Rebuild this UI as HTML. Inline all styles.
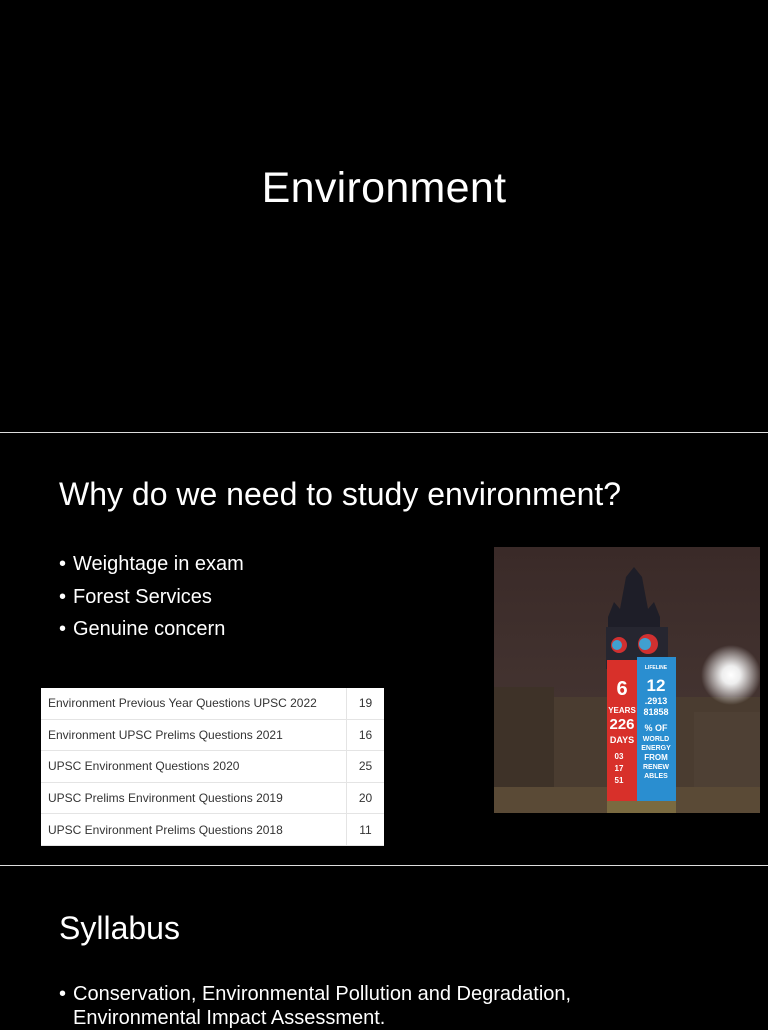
<!DOCTYPE html>
<html><head><style>
body{margin:0;width:768px;height:1024px;background:#000;overflow:hidden;position:relative;font-family:"Liberation Sans",sans-serif;color:#fff}
.a{position:absolute}
.line{position:absolute;left:0;width:768px;height:1px;background:#ddd}
.t{font-family:"Liberation Sans",sans-serif}
table{border-collapse:collapse;background:#fff;color:#333;font-size:12px}
td{height:30.6px;border-bottom:1px solid #e4e4e4;padding:0 0 0 7px}
td.n{border-left:1px solid #e4e4e4;text-align:center;padding:0;width:37px}
.b{position:relative;padding-left:14px}
.b:before{content:"•";position:absolute;left:0}
</style></head><body>
<div class="a t" style="left:0;width:768px;top:164px;text-align:center;font-size:43px;letter-spacing:0.3px">Environment</div>
<div class="line" style="top:432px"></div>
<div class="a t" style="left:59px;top:476px;font-size:32px">Why do we need to study environment?</div>
<div class="a t" style="left:59px;top:548px;font-size:20px;line-height:32.5px"><div class="b">Weightage in exam</div><div class="b">Forest Services</div><div class="b">Genuine concern</div></div>
<table class="a" style="left:41px;top:688px;width:343px">
<tr><td>Environment Previous Year Questions UPSC 2022</td><td class="n">19</td></tr>
<tr><td>Environment UPSC Prelims Questions 2021</td><td class="n">16</td></tr>
<tr><td>UPSC Environment Questions 2020</td><td class="n">25</td></tr>
<tr><td>UPSC Prelims Environment Questions 2019</td><td class="n">20</td></tr>
<tr><td>UPSC Environment Prelims Questions 2018</td><td class="n">11</td></tr>
</table>
<svg class="a" style="left:494px;top:547px" width="266" height="266" viewBox="0 0 266 266">
<defs><linearGradient id="s" x1="0" y1="0" x2="0" y2="1"><stop offset="0" stop-color="#3a2a28"/><stop offset="1" stop-color="#4a3a36"/></linearGradient>
<radialGradient id="l" cx="0.5" cy="0.5" r="0.5"><stop offset="0" stop-color="#fff"/><stop offset="0.3" stop-color="#eee"/><stop offset="1" stop-color="#fff" stop-opacity="0"/></radialGradient></defs>
<rect width="266" height="266" fill="url(#s)"/>
<rect x="0" y="150" width="266" height="116" fill="#4a3c30"/>
<rect x="0" y="140" width="60" height="126" fill="#3e3228"/>
<rect x="200" y="165" width="66" height="101" fill="#4e4034"/>
<rect x="0" y="240" width="266" height="26" fill="#5a4a36"/>
<circle cx="237" cy="128" r="30" fill="url(#l)"/>
<path d="M114 88 L114 70 L120 55 L126 62 L132 30 L140 20 L148 30 L154 62 L160 55 L166 70 L166 88 Z" fill="#1e1e28"/>
<rect x="112" y="80" width="62" height="42" fill="#262630"/>
<circle cx="125" cy="98" r="8" fill="#d03030"/><circle cx="154" cy="97" r="10" fill="#d03030"/>
<circle cx="123" cy="98" r="5" fill="#40a0d0"/><circle cx="151" cy="97" r="6" fill="#40a0d0"/>
<rect x="113" y="113" width="30" height="141" fill="#d8302a"/>
<rect x="143" y="110" width="39" height="144" fill="#2a8ed0"/>
<rect x="113" y="254" width="69" height="12" fill="#7a6a40"/>
<g fill="#fff" font-family="Liberation Sans,sans-serif" font-weight="bold" text-anchor="middle">
<text x="128" y="148" font-size="20">6</text><text x="128" y="166" font-size="8">YEARS</text>
<text x="128" y="182" font-size="15">226</text><text x="128" y="196" font-size="9">DAYS</text>
<text x="125" y="212" font-size="8">03</text><text x="125" y="224" font-size="8">17</text><text x="125" y="236" font-size="8">51</text>
<text x="162" y="122" font-size="5">LIFELINE</text><text x="162" y="144" font-size="17">12</text>
<text x="162" y="157" font-size="9">.2913</text><text x="162" y="168" font-size="9">81858</text>
<text x="162" y="184" font-size="9">% OF</text><text x="162" y="194" font-size="7">WORLD</text>
<text x="162" y="203" font-size="7">ENERGY</text><text x="162" y="213" font-size="8">FROM</text>
<text x="162" y="222" font-size="7">RENEW</text><text x="162" y="231" font-size="7">ABLES</text></g>
</svg>
<div class="line" style="top:865px"></div>
<div class="a t" style="left:59px;top:910px;font-size:32px">Syllabus</div>
<div class="a t" style="left:59px;top:982px;font-size:20px;line-height:24px"><div class="b">Conservation, Environmental Pollution and Degradation,<br>Environmental Impact Assessment.</div></div>
</body></html>
